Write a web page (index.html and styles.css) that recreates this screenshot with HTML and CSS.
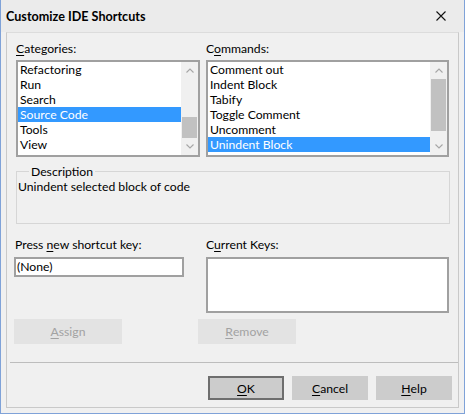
FILE: index.html
```html
<!DOCTYPE html>
<html>
<head>
<meta charset="utf-8">
<link rel="stylesheet" href="styles.css">
</head>
<body>
<div class="window">
  <div class="titlebar">
    <span class="title">Customize IDE Shortcuts</span>
    <svg class="close" width="10" height="10" viewBox="0 0 10 10"><path d="M0.5 0.5L9.5 9.5M9.5 0.5L0.5 9.5" stroke="#111" stroke-width="1.1" fill="none"/></svg>
  </div>
  <div class="client">
    <div class="panel">
      <div class="lists">
        <div class="listcol cat">
          <div class="label"><u>C</u>ategories:</div>
          <div class="listbox">
            <ul class="items">
              <li>Refactoring</li>
              <li>Run</li>
              <li>Search</li>
              <li class="sel">Source Code</li>
              <li>Tools</li>
              <li>View</li>
            </ul>
            <div class="vscroll">
              <div class="sbtn"><svg width="8" height="5" viewBox="0 0 8 5"><path d="M0.5 4.5L4 1L7.5 4.5" stroke="#a6a6a6" stroke-width="1.1" fill="none"/></svg></div>
              <div class="track end"><div class="thumb short"></div></div>
              <div class="sbtn"><svg width="8" height="5" viewBox="0 0 8 5"><path d="M0.5 0.5L4 4L7.5 0.5" stroke="#a6a6a6" stroke-width="1.1" fill="none"/></svg></div>
            </div>
          </div>
        </div>
        <div class="listcol cmd">
          <div class="label">C<u>o</u>mmands:</div>
          <div class="listbox">
            <ul class="items">
              <li>Comment out</li>
              <li>Indent Block</li>
              <li>Tabify</li>
              <li>Toggle Comment</li>
              <li>Uncomment</li>
              <li class="sel">Unindent Block</li>
            </ul>
            <div class="vscroll">
              <div class="sbtn"><svg width="8" height="5" viewBox="0 0 8 5"><path d="M0.5 4.5L4 1L7.5 4.5" stroke="#a6a6a6" stroke-width="1.1" fill="none"/></svg></div>
              <div class="track"><div class="thumb long"></div></div>
              <div class="sbtn"><svg width="8" height="5" viewBox="0 0 8 5"><path d="M0.5 0.5L4 4L7.5 0.5" stroke="#a6a6a6" stroke-width="1.1" fill="none"/></svg></div>
            </div>
          </div>
        </div>
      </div>

      <fieldset class="desc">
        <legend>Description</legend>
        <div class="desc-text">Unindent selected block of code</div>
      </fieldset>

      <div class="keys">
        <div class="keycol left">
          <div class="label">Press <u>n</u>ew shortcut key:</div>
          <div class="input">(None)</div>
        </div>
        <div class="keycol right">
          <div class="label">C<u>u</u>rrent Keys:</div>
          <div class="keybox"></div>
        </div>
      </div>

      <div class="actions">
        <div class="btn disabled assign"><u>A</u>ssign</div>
        <div class="btn disabled remove"><u>R</u>emove</div>
      </div>

      <div class="separator"></div>

      <div class="footer">
        <div class="btn default"><u>O</u>K</div>
        <div class="btn"><u>C</u>ancel</div>
        <div class="btn"><u>H</u>elp</div>
      </div>
    </div>
  </div>
</div>
</body>
</html>
```

FILE: styles.css
```css
* { box-sizing: border-box; }
html, body { margin: 0; padding: 0; background: #f0f0f0; }
body {
  font-family: Lato, "Noto Sans", sans-serif;
  font-size: 12.2px;
  line-height: 15px;
  color: #000;
}
u { text-decoration: underline; text-underline-offset: 2px; }

.window {
  width: 465px;
  height: 414px;
  border-left: 1px solid #7fa2d8;
  border-right: 1px solid #7fa2d8;
  border-bottom: 1px solid #7fa2d8;
  background: #f0f0f0;
  display: flex;
  flex-direction: column;
}

.titlebar {
  height: 32px;
  background: #ebebeb;
  display: flex;
  align-items: center;
  padding-left: 5px;
}
.title {
  font-weight: bold;
  font-size: 12.6px;
  line-height: 15px;
}
.close {
  margin-left: auto;
  margin-right: 18px;
  display: block;
}

.client {
  padding: 0 5px 5px 5px;
  flex: 1;
  display: flex;
}
.panel {
  width: 453px;
  height: 376px;
  border: 1px solid #c9c9c9;
  border-top-color: #dcdcdc;
  background: #f0f0f0;
}

.lists {
  display: flex;
  gap: 6px;
  margin-top: 8px;
  padding-left: 9px;
}
.listcol.cat { width: 184px; }
.listcol.cmd { width: 243px; }
.label {
  height: 15px;
  margin-bottom: 4px;
  white-space: nowrap;
}
.listbox {
  height: 97px;
  border: 2px solid #a0a0a0;
  background: #fff;
  display: flex;
}
.items {
  list-style: none;
  margin: 0;
  padding: 0;
  flex: 1;
}
.items li {
  height: 15px;
  line-height: 15px;
  padding-left: 2px;
  white-space: nowrap;
}
.items li.sel {
  background: #3399ff;
  color: #fff;
}
.vscroll {
  width: 17px;
  background: #f0f0f0;
  display: flex;
  flex-direction: column;
}
.sbtn {
  height: 17px;
  display: flex;
  align-items: center;
  justify-content: center;
}
.sbtn svg { display: block; }
.track {
  flex: 1;
  display: flex;
  flex-direction: column;
}
.track.end { justify-content: flex-end; }
.thumb {
  background: #c1c1c1;
  margin: 0 1px;
}
.thumb.short { height: 21px; }
.thumb.long { height: 52px; }

.desc {
  margin: 7px 0 0 9px;
  width: 434px;
  border: 1px solid #d6d6d6;
  padding: 0 0 0 1px;
  min-width: 0;
}
.desc legend {
  padding: 0 2px;
  margin-left: 11px;
  line-height: 15px;
}
.desc-text {
  height: 44px;
}

.keys {
  display: flex;
  margin-top: 13px;
  padding-left: 7px;
  gap: 22px;
}
.keycol.left { width: 170px; }
.keycol.right { width: 243px; }
.keys .label { margin-bottom: 5px; padding-left: 1px; }
.keycol.right .label { padding-left: 0; }
.input {
  height: 20px;
  border: 2px solid #a0a0a0;
  background: #fff;
  line-height: 16px;
  padding-left: 1px;
}
.keybox {
  height: 56px;
  border: 2px solid #a0a0a0;
  background: #fff;
}

.btn {
  display: flex;
  align-items: center;
  justify-content: center;
  background: #cccccc;
  border: 1px solid #cccccc;
}
.btn.disabled {
  background: #e3e3e3;
  border-color: #e3e3e3;
  color: #a2a2a2;
  height: 25px;
}
.actions {
  display: flex;
  margin-top: 6px;
  padding-left: 7px;
}
.assign { width: 108px; }
.remove { width: 98px; margin-left: 76px; }

.separator {
  margin: 18px 0 0 3px;
  height: 1px;
  background: #bdbdbd;
}

.footer {
  display: flex;
  gap: 8px;
  margin-top: 13px;
  padding-left: 201px;
}
.footer .btn {
  width: 76px;
  height: 24px;
}
.footer .btn.default {
  border: 2px solid #6e6e6e;
}
```
